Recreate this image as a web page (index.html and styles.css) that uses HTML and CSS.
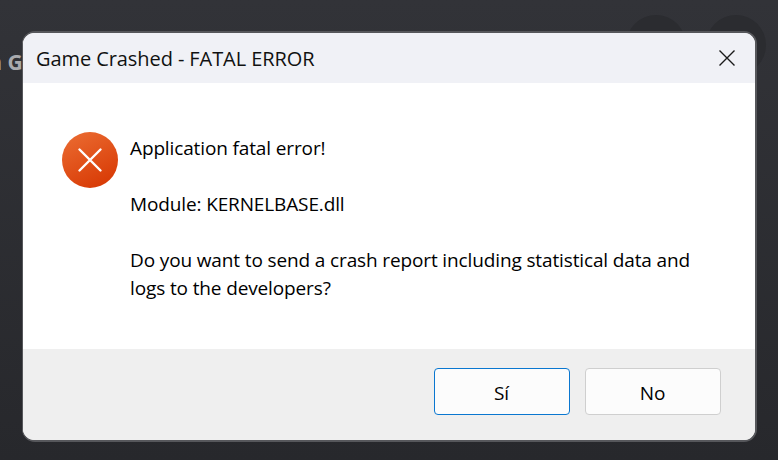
FILE: index.html
```html
<!DOCTYPE html>
<html lang="en">
<head>
    <meta charset="UTF-8">
    <meta name="viewport" content="width=device-width, initial-scale=1.0">
    <title>Game Crashed</title>
    <link rel="stylesheet" href="styles.css">
</head>
<body>
    <div class="backdrop">
        <span class="backdrop-title">Join G</span>
        <div class="backdrop-buttons">
            <div class="round-btn"></div>
            <div class="round-btn"></div>
        </div>
    </div>

    <div class="dialog">
        <div class="titlebar">
            <span class="title">Game Crashed - FATAL ERROR</span>
            <svg class="close" width="16" height="16" viewBox="0 0 16 16">
                <path d="M0.5 0.5 L15.5 15.5 M15.5 0.5 L0.5 15.5" stroke="#1a1a1a" stroke-width="1.4" fill="none"/>
            </svg>
        </div>
        <div class="content">
            <svg class="icon" width="56" height="56" viewBox="0 0 56 56">
                <defs>
                    <linearGradient id="red" x1="0.2" y1="0" x2="0.7" y2="1">
                        <stop offset="0" stop-color="#ea6a30"/>
                        <stop offset="1" stop-color="#d83a05"/>
                    </linearGradient>
                </defs>
                <circle cx="28" cy="28" r="28" fill="url(#red)"/>
                <path d="M17.5 17.5 L38.5 38.5 M38.5 17.5 L17.5 38.5" stroke="#fff" stroke-width="2.4" stroke-linecap="round"/>
            </svg>
            <div class="message">
                <p>Application fatal error!</p>
                <p>Module: KERNELBASE.dll</p>
                <p>Do you want to send a crash report including statistical data and logs to the developers?</p>
            </div>
        </div>
        <div class="footer">
            <button class="btn btn-default">Sí</button>
            <button class="btn">No</button>
        </div>
    </div>
</body>
</html>
```

FILE: styles.css
```css
html, body {
    margin: 0;
    height: 100%;
}

body {
    width: 778px;
    height: 460px;
    overflow: hidden;
    position: relative;
    padding: 31px 21px 18px 22px;
    box-sizing: border-box;
    background: linear-gradient(#323338, #27282c);
    font-family: "Open Sans", "Noto Sans", sans-serif;
}

/* app behind the dialog */
.backdrop {
    position: absolute;
    top: 15px;
    left: 0;
    right: 0;
    display: flex;
    justify-content: space-between;
    padding-right: 12px;
}

.backdrop-title {
    margin-left: -38px;
    margin-top: 33px;
    font-size: 21px;
    font-weight: 700;
    color: #a9aaae;
    white-space: nowrap;
}

.backdrop-buttons {
    display: flex;
    gap: 20px;
}

.round-btn {
    width: 60px;
    height: 60px;
    border-radius: 50%;
    background-color: #2b2c30;
}

.dialog {
    position: relative;
    height: 411px;
    box-sizing: border-box;
    border: 2px solid #56575b;
    border-left-width: 1px;
    border-radius: 13px;
    overflow: hidden;
    display: flex;
    flex-direction: column;
    background-color: #fff;
}

.titlebar {
    height: 50px;
    flex: none;
    display: flex;
    align-items: center;
    justify-content: space-between;
    padding: 0 20px 0 13px;
    background-color: #f0f1f6;
}

.title {
    font-size: 20px;
    letter-spacing: -0.08px;
    color: #111;
    white-space: nowrap;
}

.close {
    margin-bottom: 1px;
}

.content {
    flex: 1;
    display: flex;
    align-items: flex-start;
    padding: 49px 38px 0 39px;
    color: #000;
}

.icon {
    flex: none;
    margin-right: 12px;
}

.message {
    font-size: 19px;
    letter-spacing: -0.13px;
    line-height: 28px;
    margin-top: 2px;
}

.message p {
    margin: 0 0 28px;
}

.footer {
    height: 91px;
    flex: none;
    box-sizing: border-box;
    display: flex;
    justify-content: flex-end;
    gap: 15px;
    padding: 19px 34px 0 0;
    background-color: #efefef;
}

.btn {
    width: 136px;
    height: 47px;
    box-sizing: border-box;
    border: 1px solid #cfcfcf;
    border-radius: 4px;
    background-color: #fcfcfc;
    font-family: inherit;
    font-size: 19px;
    color: #000;
    padding: 2px 1px 0 0;
}

.btn-default {
    border-color: #0a77d0;
}
```
